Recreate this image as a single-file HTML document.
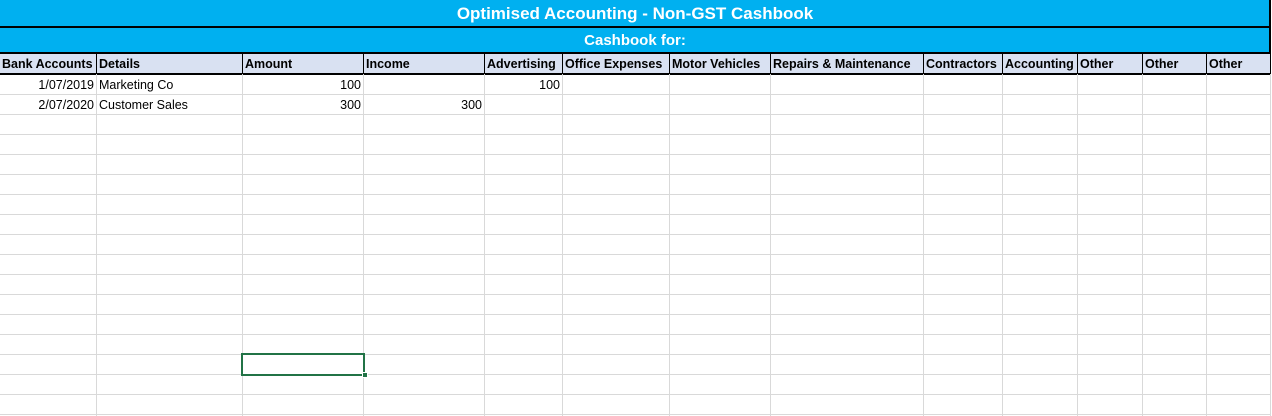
<!DOCTYPE html>
<html><head><style>
body{margin:0;width:1272px;height:416px;overflow:hidden;background:#fff;font-family:"Liberation Sans",sans-serif;position:relative}
.a{position:absolute}
.t{left:0;width:1270px;background:#00b0f0;color:#fff;font-weight:bold;text-align:center}
.v{width:1px;background:#d9d9d9;top:74px;height:342px}
.h{left:0;width:1270px;height:1px;background:#d9d9d9}
.hd{top:54px;height:19px;background:#d9e1f2;font-weight:bold;font-size:12.5px;line-height:21px;white-space:nowrap;overflow:hidden;border-left:1px solid #000;box-sizing:border-box;padding-left:2px}
.c{font-size:12.5px;line-height:21px;white-space:nowrap}
</style></head><body>
<div class="a t" style="top:0;height:26px;line-height:27px;font-size:17px">Optimised Accounting - Non-GST Cashbook</div>
<div class="a" style="top:26px;left:0;width:1271px;height:2px;background:#000"></div>
<div class="a t" style="top:28px;height:25px;line-height:25px;font-size:15px">Cashbook for:</div>
<div class="a" style="top:52px;left:0;width:1271px;height:2px;background:#000"></div>
<div class="a" style="top:0;left:1269px;width:2px;height:75px;background:#000"></div>
<div class="a hd" style="left:0;width:96px;border-left:0">Bank Accounts</div>
<div class="a hd" style="left:96px;width:146px">Details</div>
<div class="a hd" style="left:242px;width:121px">Amount</div>
<div class="a hd" style="left:363px;width:121px">Income</div>
<div class="a hd" style="left:484px;width:78px">Advertising</div>
<div class="a hd" style="left:562px;width:107px">Office Expenses</div>
<div class="a hd" style="left:669px;width:101px">Motor Vehicles</div>
<div class="a hd" style="left:770px;width:153px">Repairs &amp; Maintenance</div>
<div class="a hd" style="left:923px;width:79px">Contractors</div>
<div class="a hd" style="left:1002px;width:75px">Accounting</div>
<div class="a hd" style="left:1077px;width:65px">Other</div>
<div class="a hd" style="left:1142px;width:64px">Other</div>
<div class="a hd" style="left:1206px;width:64px">Other</div>
<div class="a" style="top:73px;left:0;width:1271px;height:2px;background:#000"></div>
<div class="a v" style="left:96px"></div><div class="a v" style="left:242px"></div><div class="a v" style="left:363px"></div><div class="a v" style="left:484px"></div><div class="a v" style="left:562px"></div><div class="a v" style="left:669px"></div><div class="a v" style="left:770px"></div><div class="a v" style="left:923px"></div><div class="a v" style="left:1002px"></div><div class="a v" style="left:1077px"></div><div class="a v" style="left:1142px"></div><div class="a v" style="left:1206px"></div><div class="a v" style="left:1270px"></div>
<div class="a h" style="top:94px"></div><div class="a h" style="top:114px"></div><div class="a h" style="top:134px"></div><div class="a h" style="top:154px"></div><div class="a h" style="top:174px"></div><div class="a h" style="top:194px"></div><div class="a h" style="top:214px"></div><div class="a h" style="top:234px"></div><div class="a h" style="top:254px"></div><div class="a h" style="top:274px"></div><div class="a h" style="top:294px"></div><div class="a h" style="top:314px"></div><div class="a h" style="top:334px"></div><div class="a h" style="top:354px"></div><div class="a h" style="top:374px"></div><div class="a h" style="top:394px"></div><div class="a h" style="top:414px"></div>
<div class="a c" style="top:75px;left:0;width:94px;text-align:right">1/07/2019</div>
<div class="a c" style="top:75px;left:99px">Marketing Co</div>
<div class="a c" style="top:75px;left:242px;width:119px;text-align:right">100</div>
<div class="a c" style="top:75px;left:484px;width:76px;text-align:right">100</div>
<div class="a c" style="top:95px;left:0;width:94px;text-align:right">2/07/2020</div>
<div class="a c" style="top:95px;left:99px">Customer Sales</div>
<div class="a c" style="top:95px;left:242px;width:119px;text-align:right">300</div>
<div class="a c" style="top:95px;left:363px;width:119px;text-align:right">300</div>
<div class="a" style="top:353px;left:241px;width:120px;height:19px;border:2px solid #217346"></div>
<div class="a" style="top:372px;left:362px;width:4px;height:4px;background:#217346;border:1px solid #fff"></div>
</body></html>
